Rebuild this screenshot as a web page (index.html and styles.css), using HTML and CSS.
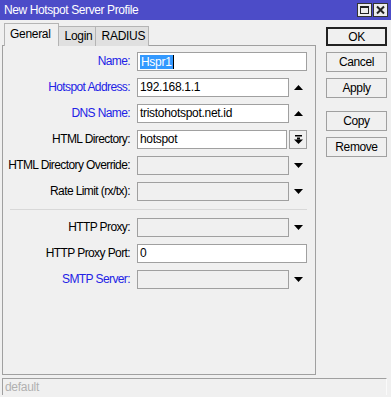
FILE: index.html
```html
<!DOCTYPE html>
<html lang="en">

<head>
    <meta charset="UTF-8">
    <title>New Hotspot Server Profile</title>
    <link rel="stylesheet" href="styles.css">
</head>

<body>
    <div class="window">
        <div class="titlebar">
            <span class="title">New Hotspot Server Profile</span>
            <div class="win-btns">
                <span class="win-btn">
                    <svg width="13" height="12" viewBox="0 0 13 12"><rect x="2.5" y="2.5" width="8" height="7" fill="none" stroke="#222" stroke-width="1"/><rect x="2" y="2" width="9" height="2" fill="#222"/></svg>
                </span>
                <span class="win-btn">
                    <svg width="13" height="12" viewBox="0 0 13 12"><path d="M3 2.5 L10 9.5 M10 2.5 L3 9.5" stroke="#222" stroke-width="2"/></svg>
                </span>
            </div>
        </div>

        <div class="main">
            <div class="left">
                <div class="tabs">
                    <span class="tab active">General</span>
                    <span class="tab">Login</span>
                    <span class="tab">RADIUS</span>
                </div>
                <div class="panel">
                    <div class="form">
                        <div class="lbl req">Name:</div>
                        <div class="field white span2"><span class="sel">Hspr1</span><span class="caret"></span></div>

                        <div class="lbl req">Hotspot Address:</div>
                        <div class="field white">192.168.1.1</div>
                        <div class="arrow"><svg width="9" height="5" viewBox="0 0 9 5"><polygon points="0,5 4.5,0 9,5" fill="#000"/></svg></div>

                        <div class="lbl req">DNS Name:</div>
                        <div class="field white">tristohotspot.net.id</div>
                        <div class="arrow"><svg width="9" height="5" viewBox="0 0 9 5"><polygon points="0,5 4.5,0 9,5" fill="#000"/></svg></div>

                        <div class="lbl">HTML Directory:</div>
                        <div class="field white short">hotspot</div>
                        <div class="arrow boxed"><svg width="9" height="9" viewBox="0 0 9 9"><rect x="1" y="0" width="7" height="1.5" fill="#000"/><rect x="3" y="2.5" width="3" height="2" fill="#000"/><polygon points="0,4.5 9,4.5 4.5,9" fill="#000"/></svg></div>

                        <div class="lbl">HTML Directory Override:</div>
                        <div class="field"></div>
                        <div class="arrow"><svg width="9" height="5" viewBox="0 0 9 5"><polygon points="0,0 9,0 4.5,5" fill="#000"/></svg></div>

                        <div class="lbl">Rate Limit (rx/tx):</div>
                        <div class="field"></div>
                        <div class="arrow"><svg width="9" height="5" viewBox="0 0 9 5"><polygon points="0,0 9,0 4.5,5" fill="#000"/></svg></div>

                        <div class="sep"></div>

                        <div class="lbl">HTTP Proxy:</div>
                        <div class="field"></div>
                        <div class="arrow"><svg width="9" height="5" viewBox="0 0 9 5"><polygon points="0,0 9,0 4.5,5" fill="#000"/></svg></div>

                        <div class="lbl">HTTP Proxy Port:</div>
                        <div class="field white span2">0</div>

                        <div class="lbl req">SMTP Server:</div>
                        <div class="field"></div>
                        <div class="arrow"><svg width="9" height="5" viewBox="0 0 9 5"><polygon points="0,0 9,0 4.5,5" fill="#000"/></svg></div>
                    </div>
                </div>
            </div>

            <div class="actions">
                <button class="btn default">OK</button>
                <button class="btn">Cancel</button>
                <button class="btn">Apply</button>
                <button class="btn spaced">Copy</button>
                <button class="btn">Remove</button>
            </div>
        </div>

        <div class="status">default</div>
    </div>
</body>

</html>
```

FILE: styles.css
```css
body {
    margin: 0;
    background-color: #f0f0f0;
    font-family: 'Liberation Sans', Arial, sans-serif;
    font-size: 11px;
    letter-spacing: -0.3px;
    color: #000;
}

.window {
    width: 391px;
    height: 397px;
    overflow: hidden;
}

.titlebar {
    height: 20px;
    background-color: #4c4cc8;
    display: flex;
    align-items: center;
    justify-content: space-between;
    padding: 0 3px 0 4px;
    box-sizing: border-box;
}

.title {
    color: #fff;
    font-size: 12px;
    letter-spacing: -0.4px;
}

.win-btns {
    display: flex;
    gap: 1px;
}

.win-btn {
    width: 15px;
    height: 14px;
    box-sizing: border-box;
    background-color: #ececec;
    border: 1px solid #333;
    display: flex;
    align-items: center;
    justify-content: center;
}

.main {
    display: flex;
}

.left {
    width: 316px;
    padding-left: 2px;
    box-sizing: border-box;
}

.tabs {
    display: flex;
    align-items: flex-end;
    margin: 3px 0 0 2px;
    height: 22px;
}

.tab {
    height: 20px;
    line-height: 19px;
    padding: 0 6px;
    box-sizing: border-box;
    border: 1px solid #b4b4b4;
    border-bottom: none;
    background-color: #e0e0e0;
    margin-bottom: -1px;
    font-size: 12px;
    position: relative;
}

.tab + .tab {
    border-left: none;
}

.tab.active {
    height: 23px;
    line-height: 20px;
    background-color: #f0f0f0;
    padding: 0 7px 0 5px;
    z-index: 1;
}

.tab:nth-child(2) {
    width: 37px;
}

.tab:nth-child(3) {
    width: 53px;
}

.panel {
    height: 330px;
    border: 1px solid #a0a0a0;
    box-sizing: border-box;
    background-color: #f0f0f0;
}

.form {
    display: grid;
    grid-template-columns: 134px 152px 18px;
    row-gap: 7px;
    padding-top: 6px;
}

.lbl {
    text-align: right;
    padding-right: 7px;
    height: 19px;
    line-height: 19px;
    white-space: nowrap;
    font-size: 12px;
    letter-spacing: -0.6px;
}

.req {
    color: #2222e6;
}

.field {
    height: 19px;
    border: 1px solid #a0a0a0;
    box-sizing: border-box;
    background-color: #f0f0f0;
    line-height: 17px;
    padding-left: 2px;
    font-size: 12px;
    white-space: nowrap;
    overflow: hidden;
    display: flex;
    align-items: center;
}

.field.white {
    background-color: #fff;
}

.field.span2 {
    grid-column: span 2;
}

.field.short {
    margin-right: 2px;
}

.sel {
    background-color: #3399ff;
    color: #fff;
    line-height: 14px;
    padding: 0 1px;
}

.caret {
    display: inline-block;
    width: 1px;
    height: 14px;
    background-color: #000;
}

.arrow {
    height: 19px;
    display: flex;
    align-items: center;
    justify-content: center;
}

.arrow.boxed {
    border: 1px solid #a0a0a0;
    box-sizing: border-box;
}

.sep {
    grid-column: 1 / -1;
    height: 1px;
    margin: 1px 0 1px 7px;
    background-color: #d8d8d8;
}

.actions {
    display: flex;
    flex-direction: column;
    gap: 6px;
    margin-left: 10px;
    padding-top: 7px;
    width: 61px;
}

.btn {
    height: 20px;
    padding: 0;
    background-color: #f0f0f0;
    border: 1px solid #a0a0a0;
    font-family: 'Liberation Sans', Arial, sans-serif;
    font-size: 12px;
    letter-spacing: -0.4px;
    color: #000;
}

.btn.default {
    border: 1px solid #222;
    box-shadow: inset 0 0 0 1px #222;
    height: 19px;
}

.btn.spaced {
    margin-top: 7px;
}

.status {
    margin: 3px 4px 0 2px;
    height: 17px;
    border-top: 1px solid #a0a0a0;
    border-left: 1px solid #a0a0a0;
    border-right: 1px solid #fafafa;
    box-sizing: border-box;
    color: #b0b0b0;
    padding-left: 2px;
    line-height: 16px;
    font-size: 12px;
}
```
